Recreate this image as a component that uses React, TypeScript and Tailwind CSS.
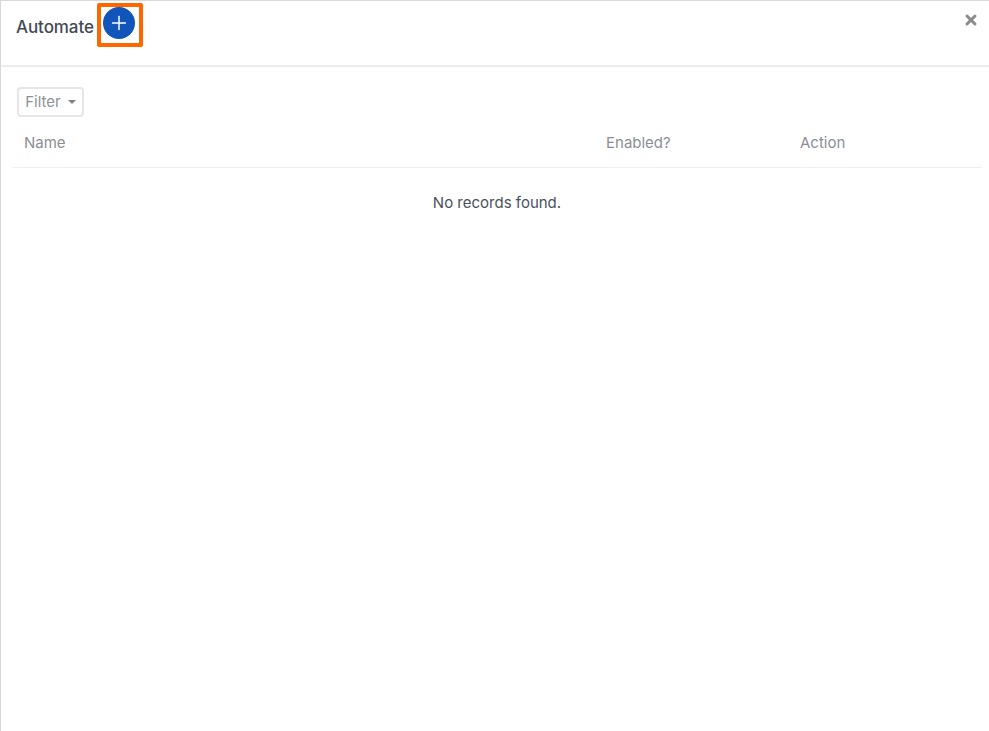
import { Plus, X } from "lucide-react";

const font = { fontFamily: '"Inter", "Liberation Sans", sans-serif' };

export default function App() {
  return (
    <div
      className="h-[731px] w-[989px] overflow-hidden border-t border-l border-[#d9d9d9] bg-white"
      style={font}
    >
      {/* header */}
      <div className="relative flex h-[66px] items-center border-b-2 border-[#ececec] pl-[15px]">
        <span className="mb-[15px] mt-[3px] text-[17px] font-medium leading-[24px] tracking-[-0.08px] text-[#434a54]">Automate</span>
        <div className="relative mb-[20px] ml-[9px] flex h-[32px] w-[32px] items-center justify-center rounded-full bg-[#1155bb]">
          <Plus size={22} strokeWidth={1.6} className="text-white" />
          {/* callout box */}
          <div className="absolute left-[-6px] top-[-4px] h-[44px] w-[46px] rounded-[2px] border-[4px] border-[#ff6600]" />
        </div>
        <button className="absolute right-[10px] top-[11px] text-[#8a8a8a]">
          <X size={16} strokeWidth={4.5} />
        </button>
      </div>

      {/* filter */}
      <div className="pl-[16px] pt-[20px]">
        <button className="flex h-[30px] w-[67px] items-center justify-center gap-[7px] rounded-[4px] border-2 border-[#e4e6e9] text-[15px] text-[#8d9299]">
          Filter
          <span className="h-0 w-0 border-x-[4px] border-t-[4px] border-x-transparent border-t-[#7d8288]" />
        </button>
      </div>

      {/* table */}
      <div className="ml-[11px] mt-[8px] w-[970px]">
        <div className="grid h-[43px] grid-cols-[594px_194px_1fr] items-center border-b border-[#f0f0f0] pb-[5px] text-[15px] text-[#8b8f94]">
          <span className="pl-[12px]">Name</span>
          <span>Enabled?</span>
          <span>Action</span>
        </div>
        <div className="pt-[25px] text-center text-[15px] leading-[20px] text-[#4a5160]">No records found.</div>
      </div>
    </div>
  );
}
